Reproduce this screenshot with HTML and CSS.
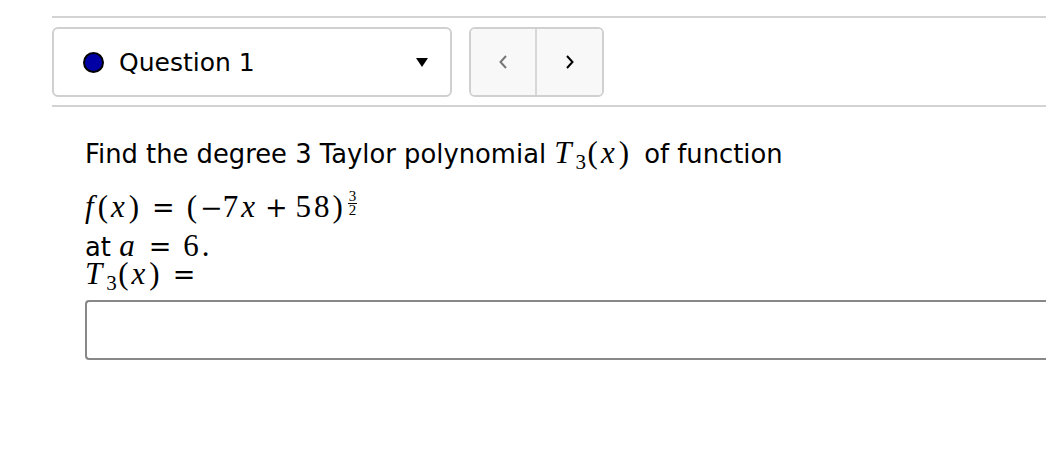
FILE: index.html
```html
<!DOCTYPE html>
<html>
<head>
<meta charset="utf-8">
<link rel="stylesheet" href="styles.css">
</head>
<body>
<div class="page">
  <div class="rule top"></div>
  <div class="nav">
    <div class="select">
      <span class="dot"></span>
      <span class="qlabel">Question 1</span>
      <span class="caret"></span>
    </div>
    <div class="pager">
      <button class="pbtn prev" type="button">
        <svg width="12" height="18" viewBox="0 0 12 18"><path d="M9 3 L3.5 9 L9 15" fill="none" stroke="#777" stroke-width="2"/></svg>
      </button>
      <button class="pbtn next" type="button">
        <svg width="12" height="18" viewBox="0 0 12 18"><path d="M3 3 L8.5 9 L3 15" fill="none" stroke="#000" stroke-width="2"/></svg>
      </button>
    </div>
  </div>
  <div class="rule bottom"></div>
  <div class="question">
    <div class="line l1">Find the degree 3 Taylor polynomial <span class="m inl"><i>T</i><sub>3</sub>(<i>x</i>)</span> of function</div>
    <div class="line l2"><span class="m"><i>f</i>(<i>x</i>)<span class="op">=</span>(<span class="minus">−</span>7<i>x</i><span class="op bin">+</span>58)<span class="frac"><span class="num">3</span><span class="den">2</span></span></span></div>
    <div class="line l3">at <span class="m"><i>a</i><span class="op">=</span>6.</span></div>
    <div class="line l4"><span class="m"><i>T</i><sub>3</sub>(<i>x</i>)<span class="op">=</span></span></div>
    <div class="answer"></div>
  </div>
</div>
</body>
</html>
```
FILE: styles.css
```css
html, body { margin: 0; padding: 0; background: #fff; }
body { font-family: "DejaVu Sans", Verdana, sans-serif; color: #000; overflow: hidden; }
.page { padding: 16px 0 0 52px; }
.rule { height: 2px; background: #d3d3d3; }
.nav { display: flex; align-items: stretch; padding: 9px 0 8px 0; gap: 17px; }
.select {
  width: 367px; height: 66px; border: 2px solid #d0d0d0; border-radius: 6px;
  display: flex; align-items: center; padding-left: 29px;
}
.dot { width: 17px; height: 17px; border-radius: 50%; background: #0000a5; border: 2px solid #000; }
.qlabel { font-size: 25px; margin-left: 15px; flex: 1; letter-spacing: 0; }
.caret { width: 0; height: 0; border-left: 6px solid transparent; border-right: 6px solid transparent; border-top: 9px solid #000; margin-right: 22px; }
.pager { display: flex; border: 2px solid #d0d0d0; border-radius: 6px; overflow: hidden; height: 66px; }
.pbtn { width: 66px; background: #f8f8f8; border: 0; padding: 0; display: flex; align-items: center; justify-content: center; }
.pbtn.prev { border-right: 2px solid #d8d8d8; }
.pbtn.next { width: 65px; }
.question { padding: 29px 0 0 33px; font-size: 25.8px; letter-spacing: 0; }
.line { white-space: nowrap; }
.l1 { line-height: 34px; }
.m { font-family: "Liberation Serif", "DejaVu Serif", serif; font-size: 31px; letter-spacing: 3px; }
.m i { letter-spacing: 4px; }
.m.inl { margin-right: 4px; }
.m sub { font-size: 21px; vertical-align: -6px; line-height: 0; letter-spacing: 1.5px; }
.op { font-family: "DejaVu Serif", serif; font-size: 27px; padding: 0 12px 0 10px; letter-spacing: 0; }
.op.bin { padding: 0 8px 0 6px; }
.minus { font-family: "DejaVu Serif", serif; font-size: 27px; letter-spacing: 0; }
.frac { display: inline-flex; flex-direction: column; align-items: center; vertical-align: 16px; font-size: 15px; line-height: 13px; margin-left: 2px; letter-spacing: 0; }
.frac .num { border-bottom: 1px solid #000; padding: 0 1px; }
.l2 { line-height: 44px; margin-top: 14px; }
.l3 { line-height: 32px; }
.l4 { line-height: 22px; }
.answer { margin-top: 14px; height: 56px; border: 2px solid #888; border-right: 0; border-radius: 4px 0 0 4px; }
```
